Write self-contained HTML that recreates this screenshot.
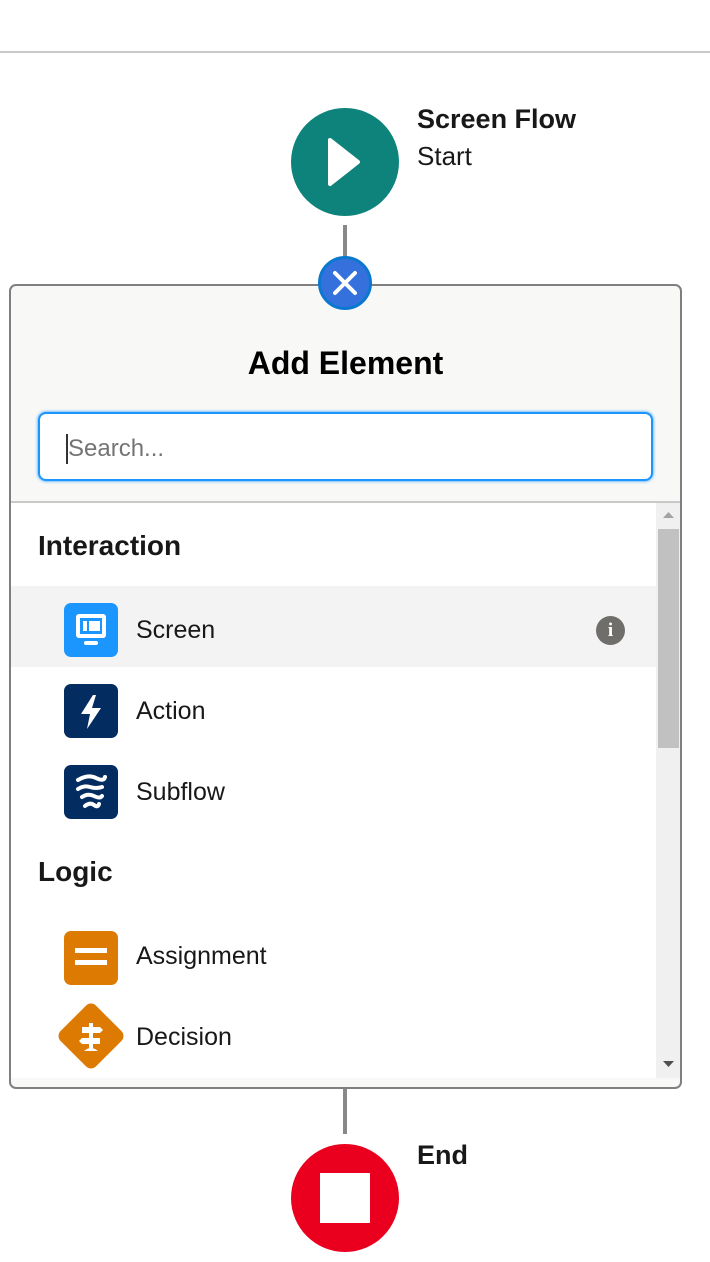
<!DOCTYPE html>
<html><head><style>
body{margin:0;width:710px;height:1262px;position:relative;background:#fff;font-family:"Liberation Sans",sans-serif;overflow:hidden;color:#181818}
.a{position:absolute}
.ic{position:absolute;left:64px;width:54px;height:54px;border-radius:7px}
.lb{position:absolute;left:136px;font-size:25px}
.h{position:absolute;left:38px;font-size:28px;font-weight:bold}
</style></head><body>
<div class="a" style="left:0;top:51px;width:710px;height:2px;background:#c9c9c9"></div>
<div class="a" style="left:291px;top:108px;width:108px;height:108px;border-radius:50%;background:#0d837b"></div>
<svg class="a" style="left:324px;top:134px" width="40" height="56"><path d="M6 6 L34 28 L6 50 Z" fill="#fff" stroke="#fff" stroke-width="4" stroke-linejoin="round"/></svg>
<div class="a" style="left:417px;top:104px;font-size:27px;font-weight:bold">Screen Flow</div>
<div class="a" style="left:417px;top:141px;font-size:26px">Start</div>
<div class="a" style="left:343px;top:225px;width:4px;height:35px;background:#888"></div>
<div class="a" style="left:343px;top:1088px;width:4px;height:46px;background:#888"></div>
<div class="a" style="left:9px;top:284px;width:669px;height:801px;border:2px solid #7f7f7f;border-radius:7px;background:#f8f8f7;overflow:hidden">
 <div class="a" style="left:0;top:59px;width:669px;text-align:center;font-size:32px;font-weight:bold;color:#000">Add Element</div>
 <div class="a" style="left:27px;top:126px;width:611px;height:65px;border:2px solid #1b96ff;border-radius:8px;background:#fff;box-shadow:0 0 3px #1b96ff"></div>
 <div class="a" style="left:55px;top:148px;width:2px;height:30px;background:#333"></div>
 <div class="a" style="left:57px;top:149px;font-size:24px;color:#747474">Search...</div>
 <div class="a" style="left:0;top:215px;width:669px;height:2px;background:#c9c9c9"></div>
 <div class="a" style="left:0;top:217px;width:645px;height:575px;background:#fff">
  <div class="h" style="top:27px;left:27px">Interaction</div>
  <div class="a" style="left:0;top:83px;width:645px;height:81px;background:#f3f3f3"></div>
 </div>
 <div class="a" style="left:645px;top:217px;width:24px;height:575px;background:#f0f0f0">
  <div class="a" style="left:2px;top:26px;width:21px;height:219px;background:#c1c1c1"></div>
  <svg class="a" style="left:7px;top:9px" width="11" height="7"><path d="M0 6 L5.5 0 L11 6Z" fill="#a3a3a3"/></svg>
  <svg class="a" style="left:7px;top:558px" width="11" height="7"><path d="M0 0 L5.5 6 L11 0Z" fill="#505050"/></svg>
 </div>
</div>
<div class="ic" style="top:603px;background:#1b96ff"></div>
<svg class="a" style="left:64px;top:603px" width="54" height="54"><rect x="12" y="11" width="30" height="24" rx="3" fill="#fff"/><rect x="16" y="15" width="22" height="16" fill="#1b96ff"/><rect x="19" y="18" width="4" height="10" fill="#fff"/><rect x="25" y="18" width="11" height="10" fill="#fff"/><rect x="20" y="38" width="14" height="4" rx="2" fill="#fff"/></svg>
<div class="lb" style="top:616px">Screen</div>
<div class="a" style="left:596px;top:616px;width:29px;height:29px;border-radius:50%;background:#706e6b;color:#fff;font-weight:bold;font-size:19px;text-align:center;line-height:29px;font-family:'Liberation Serif',serif">i</div>
<div class="ic" style="top:684px;background:#032d60"></div>
<svg class="a" style="left:64px;top:684px" width="54" height="54"><path d="M29 11 L17 30 L26 30 L23 45 L37 24 L28 24 L32 11Z" fill="#fff"/></svg>
<div class="lb" style="top:697px">Action</div>
<div class="ic" style="top:765px;background:#032d60"></div>
<svg class="a" style="left:64px;top:765px" width="54" height="54" fill="none" stroke="#fff" stroke-width="4" stroke-linecap="round"><path d="M14 15 Q24 9 32 13 T41 12"/><path d="M14 24 Q20 20 26 22 T38 22"/><path d="M18 32 Q24 28 30 31 T38 31"/><path d="M21 41 Q26 37 30 40 T35 39"/></svg>
<div class="lb" style="top:778px">Subflow</div>
<div class="h" style="top:856px">Logic</div>
<div class="ic" style="top:931px;background:#dd7a01"></div>
<div class="a" style="left:75px;top:948px;width:32px;height:5px;background:#fff"></div>
<div class="a" style="left:75px;top:960px;width:32px;height:5px;background:#fff"></div>
<div class="lb" style="top:942px">Assignment</div>
<div class="a" style="left:66px;top:1011px;width:50px;height:50px;border-radius:7px;background:#dd7a01;transform:rotate(45deg)"></div>
<svg class="a" style="left:64px;top:1009px" width="54" height="54" fill="#fff"><path d="M18 18 H36 L39 21 L36 24 H18Z"/><path d="M36 29 H18 L15 32 L18 35 H36Z"/><rect x="25" y="14" width="4" height="28"/><path d="M20 42 Q27 36 34 42Z"/></svg>
<div class="lb" style="top:1023px">Decision</div>
<div class="a" style="left:318px;top:256px;width:48px;height:48px;border-radius:50%;background:#3471dd;border:3px solid #0b78d0"></div>
<svg class="a" style="left:321px;top:259px" width="48" height="48" stroke="#fff" stroke-width="4" stroke-linecap="round"><path d="M14 14 L34 34 M34 14 L14 34"/></svg>
<div class="a" style="left:291px;top:1144px;width:108px;height:108px;border-radius:50%;background:#ea001e"></div>
<div class="a" style="left:320px;top:1173px;width:50px;height:50px;background:#fff"></div>
<div class="a" style="left:417px;top:1140px;font-size:27px;font-weight:bold">End</div>
</body></html>
